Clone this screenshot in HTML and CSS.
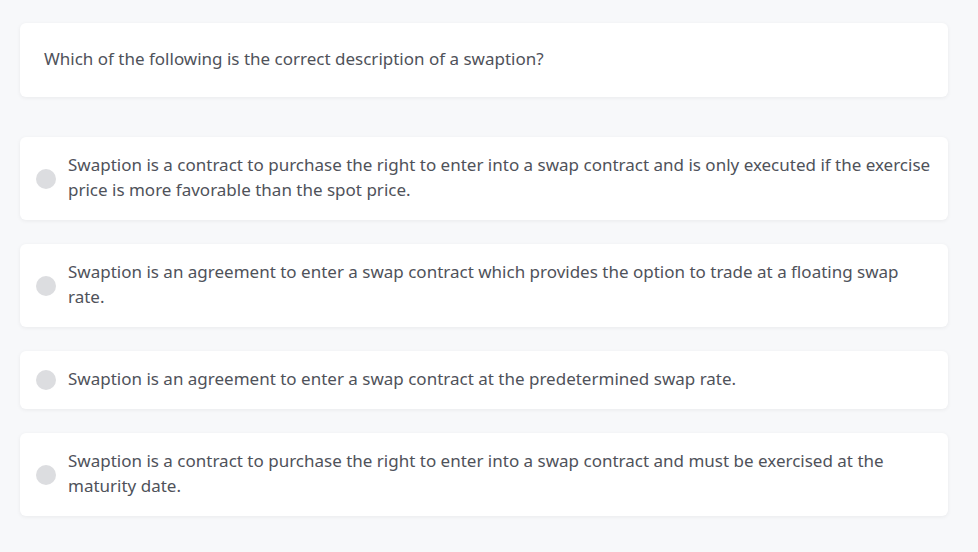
FILE: index.html
```html
<!DOCTYPE html>
<html>
<head>
<meta charset="utf-8">
<link rel="stylesheet" href="styles.css">
</head>
<body>
<div class="page">
  <div class="card question">Which of the following is the correct description of a swaption?</div>
  <div class="options">
    <div class="card option"><span class="radio"></span><span class="label">Swaption is a contract to purchase the right to enter into a swap contract and is only executed if the exercise price is more favorable than the spot price.</span></div>
    <div class="card option"><span class="radio"></span><span class="label">Swaption is an agreement to enter a swap contract which provides the option to trade at a floating swap rate.</span></div>
    <div class="card option"><span class="radio"></span><span class="label">Swaption is an agreement to enter a swap contract at the predetermined swap rate.</span></div>
    <div class="card option"><span class="radio"></span><span class="label">Swaption is a contract to purchase the right to enter into a swap contract and must be exercised at the maturity date.</span></div>
  </div>
</div>
</body>
</html>
```
FILE: styles.css
```css
html, body {
  margin: 0;
  padding: 0;
  background: #f7f8fa;
}
body {
  font-family: "Noto Sans", "Open Sans", sans-serif;
  font-size: 17px;
  color: #4f525a;
}
.page {
  padding: 23px 30px 36px 20px;
}
.card {
  background: #fff;
  border-radius: 6px;
  box-shadow: 0 1px 4px rgba(0, 0, 0, 0.06);
}
.question {
  padding: 23px 24px 26px;
  line-height: 25px;
}
.options {
  margin-top: 40px;
  display: flex;
  flex-direction: column;
  gap: 24px;
}
.option {
  display: flex;
  align-items: center;
  gap: 12px;
  padding: 16.5px 16px 16.5px 16px;
  line-height: 25px;
}
.label {
  margin: -1.5px 0 1.5px;
}
.radio {
  flex: 0 0 20px;
  width: 20px;
  height: 20px;
  border-radius: 50%;
  background: #dcdde0;
}
```
